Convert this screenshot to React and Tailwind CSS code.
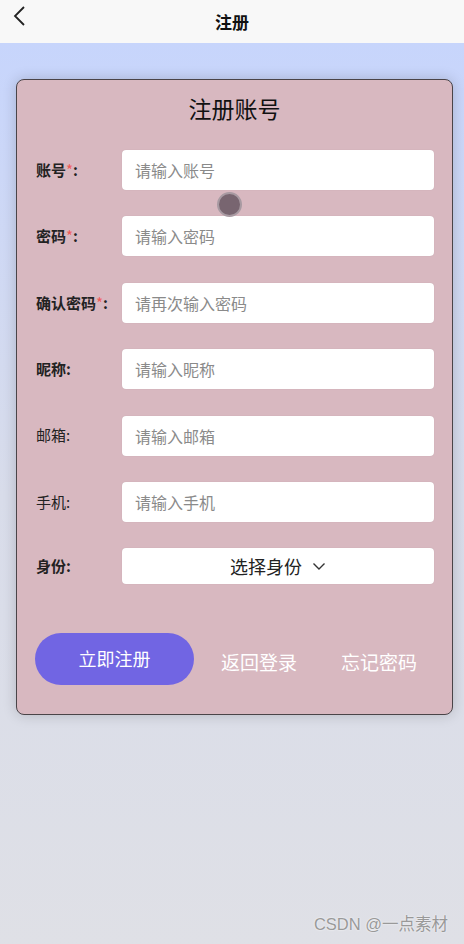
import React from "react";

const font = { fontFamily: '"Microsoft YaHei", "Noto Sans CJK SC", sans-serif' };

function Row({ label, required, bold = true, placeholder }) {
  return (
    <div className="flex items-center h-[40px]">
      <div className={`w-[87px] pl-[1px] text-[15px] text-[#222] ${bold ? "font-bold" : "font-normal"}`}>
        {label}
        {required && <span className="text-[#f05a5a] font-normal">*</span>}
        <span>:</span>
      </div>
      <div className="flex-1 h-[40px] bg-white rounded-[4px] flex items-center pl-[13px] text-[16px] text-[#8a8a8a] shadow-[0_0_1px_rgba(0,0,0,0.15)]">
        {placeholder}
      </div>
    </div>
  );
}

export default function App() {
  return (
    <div className="relative w-[464px] h-[944px] overflow-hidden flex flex-col" style={font}>
      <div className="h-[43px] bg-[#f8f8f8] flex items-center relative shrink-0">
        <svg className="absolute left-[12px] top-[5px]" width="16" height="22" viewBox="0 0 16 22">
          <path d="M12 2 L3 11 L12 20" fill="none" stroke="#222" strokeWidth="1.8" />
        </svg>
        <div className="w-full text-center text-[17px] font-bold text-[#111]">注册</div>
      </div>
      <div className="flex-1 bg-gradient-to-b from-[#c7d5fc] via-[#d8dcea] to-[#dfe0e6] pt-[36px] pl-[16px] pr-[11px]">
        <div className="bg-[#d8b8c0] border border-[#4a4448] rounded-[8px] shadow-[0_0_14px_rgba(0,0,0,0.18)] h-[636px] pl-[18px] pr-[18px] pt-[13px] flex flex-col">
          <div className="text-center text-[23px] text-[#111] leading-[30px] mb-[27px]">注册账号</div>
          <div className="flex flex-col gap-[26.4px]">
            <Row label="账号" required placeholder="请输入账号" />
            <Row label="密码" required placeholder="请输入密码" />
            <Row label="确认密码" required placeholder="请再次输入密码" />
            <Row label="昵称" placeholder="请输入昵称" />
            <Row label="邮箱" bold={false} placeholder="请输入邮箱" />
            <Row label="手机" bold={false} placeholder="请输入手机" />
            <div className="flex items-center h-[36px]">
              <div className="w-[87px] pl-[1px] text-[15px] font-bold text-[#222]">身份:</div>
              <div className="flex-1 h-[36px] bg-white rounded-[4px] flex items-center justify-center gap-[10px] text-[18px] text-[#222] shadow-[0_0_1px_rgba(0,0,0,0.15)]">
                <span>选择身份</span>
                <svg width="14" height="10" viewBox="0 0 14 10">
                  <path d="M1.5 2.5 L7 8 L12.5 2.5" fill="none" stroke="#333" strokeWidth="1.4" />
                </svg>
              </div>
            </div>
          </div>
          <div className="flex items-center mt-[49px]">
            <div className="w-[159px] h-[52px] rounded-full bg-[#7165e3] text-white text-[18px] flex items-center justify-center pb-[2px]">
              立即注册
            </div>
            <div className="ml-[27px] mt-[6px] text-[19px] text-white">返回登录</div>
            <div className="ml-[44px] mt-[6px] text-[19px] text-white">忘记密码</div>
          </div>
        </div>
      </div>
      <div className="absolute left-[217px] top-[192px] w-[25px] h-[25px] rounded-full bg-[#786570] border-[2px] border-[#a89aa2]" />
      <div className="absolute right-[16px] bottom-[7px] text-[16.5px] text-[#999] [text-shadow:0_0_2px_#fff]" style={{ fontFamily: '"Liberation Sans", "Noto Sans CJK SC", sans-serif' }}>
        CSDN @一点素材
      </div>
    </div>
  );
}
